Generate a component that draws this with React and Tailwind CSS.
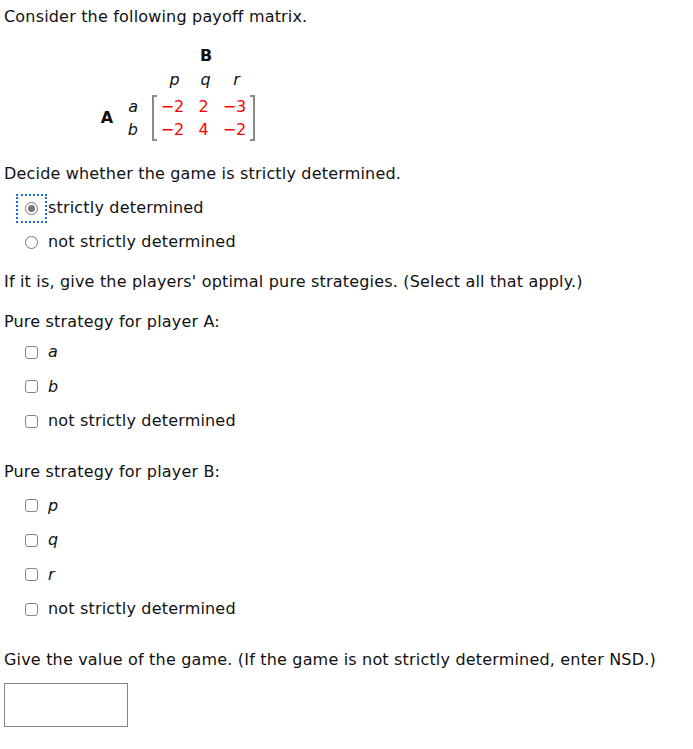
import React from 'react';

const font = { fontFamily: '"DejaVu Sans", Verdana, sans-serif' };

function Radio({ checked, focused, children }) {
  return (
    <label className="flex items-center h-[34px]">
      <span
        className={`ml-[16px] w-[31px] h-[29px] flex items-center justify-center ${
          focused ? 'border-2 border-dotted border-[#1a6fd6]' : 'border-2 border-transparent'
        }`}
      >
        <span className="w-[13px] h-[13px] rounded-full border border-[#767676] bg-white flex items-center justify-center">
          {checked && <span className="w-[7px] h-[7px] rounded-full bg-[#767676]" />}
        </span>
      </span>
      <span className="ml-[1px]">{children}</span>
    </label>
  );
}

function Check({ children, italic }) {
  return (
    <label className="flex items-center h-[34.5px]">
      <span className="ml-[25px] w-[13px] h-[13px] rounded-[3px] border border-[#858585] bg-white" />
      <span className={`ml-[10px] ${italic ? 'italic' : ''}`}>{children}</span>
    </label>
  );
}

function PayoffMatrix() {
  const rows = [
    ['a', ['−2', '2', '−3']],
    ['b', ['−2', '4', '−2']],
  ];
  return (
    <div className="pl-[93px] text-[16px] tracking-normal">
      <div className="h-[24px] flex items-center">
        <span className="ml-[101px] font-bold w-[16px] text-center">B</span>
      </div>
      <div className="h-[24px] flex items-center italic">
        <span className="ml-[62px] w-[31px] text-center">p</span>
        <span className="w-[31px] text-center">q</span>
        <span className="w-[31px] text-center">r</span>
      </div>
      <div className="flex items-center mt-[3px]">
        <span className="font-bold w-[20px] text-center">A</span>
        <div className="w-[21px] flex flex-col items-end italic">
          {rows.map(([l]) => (
            <span key={l} className="h-[23px] leading-[23px]">{l}</span>
          ))}
        </div>
        <div className="ml-[14px] w-[5px] h-[46px] border-2 border-r-0 border-[#8a8a8a]" />
        <div className="flex flex-col text-[#ff0000]">
          {rows.map(([l, vals]) => (
            <div key={l} className="flex h-[23px] leading-[23px]">
              {vals.map((v, i) => (
                <span key={i} className="w-[31px] text-center">{v}</span>
              ))}
            </div>
          ))}
        </div>
        <div className="w-[5px] h-[46px] border-2 border-l-0 border-[#8a8a8a]" />
      </div>
    </div>
  );
}

export default function App() {
  return (
    <div
      className="bg-white text-[#111] text-[16px] tracking-[0.18px] w-[693px] h-[749px] pl-[4px]"
      style={font}
    >
      <p className="pt-[6px] leading-[22px]">Consider the following payoff matrix.</p>
      <div className="mt-[16px]">
        <PayoffMatrix />
      </div>
      <p className="mt-[22px] leading-[22px]">Decide whether the game is strictly determined.</p>
      <div className="-ml-[4px] mt-[6px]">
        <Radio checked focused>strictly determined</Radio>
        <Radio>not strictly determined</Radio>
      </div>
      <p className="mt-[12px] leading-[22px]">
        If it is, give the players' optimal pure strategies. (Select all that apply.)
      </p>
      <p className="mt-[18px] leading-[22px]">Pure strategy for player A:</p>
      <div className="-ml-[4px] mt-[2px]">
        <Check italic>a</Check>
        <Check italic>b</Check>
        <Check>not strictly determined</Check>
      </div>
      <p className="mt-[22px] leading-[22px]">Pure strategy for player B:</p>
      <div className="-ml-[4px] mt-[6px]">
        <Check italic>p</Check>
        <Check italic>q</Check>
        <Check italic>r</Check>
        <Check>not strictly determined</Check>
      </div>
      <p className="mt-[22px] leading-[22px]">
        Give the value of the game. (If the game is not strictly determined, enter NSD.)
      </p>
      <input
        type="text"
        className="mt-[12px] w-[124px] h-[44px] border border-[#858585] bg-white outline-none"
      />
    </div>
  );
}
